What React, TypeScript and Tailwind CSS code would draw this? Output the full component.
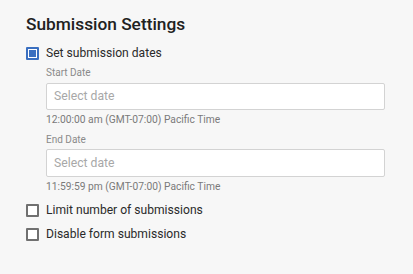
export default function App() {
  return (
    <main className="min-h-screen bg-[#f7f7f7] px-[26px] pt-[13px] font-['Roboto',sans-serif]">
      <h2 className="text-[17.3px] font-medium leading-[22px] text-[#212121]">Submission Settings</h2>

      {/* Dates */}
      <label className="mt-[9px] flex h-[18px] items-center gap-[7px]">
        <span className="flex h-[13px] w-[13px] items-center justify-center rounded-[1px] border-2 border-[#3a6fc0] bg-white">
          <span className="h-[7px] w-[7px] bg-[#3a6fc0]"></span>
        </span>
        <span className="text-[12.1px] text-[#2a2a2a]">Set submission dates</span>
      </label>

      <div className="w-[359px] pl-[20px]">
        <div className="mt-[4px] text-[10px] leading-[14px] text-[#8a8a8a]">Start Date</div>
        <div className="mt-[3px] flex h-[27px] items-center rounded-[2px] border border-[#d3d3d3] bg-white px-[7px] text-[12.2px] text-[#a8a8a8]">
          Select date
        </div>
        <div className="mt-[3px] text-[10.25px] leading-[14px] text-[#7a7a7a]">12:00:00 am (GMT-07:00) Pacific Time</div>

        <div className="mt-[6px] text-[10px] leading-[14px] text-[#8a8a8a]">End Date</div>
        <div className="mt-[2px] flex h-[28px] items-center rounded-[2px] border border-[#d3d3d3] bg-white px-[7px] text-[12.2px] text-[#a8a8a8]">
          Select date
        </div>
        <div className="mt-[3px] text-[10.25px] leading-[14px] text-[#7a7a7a]">11:59:59 pm (GMT-07:00) Pacific Time</div>
      </div>

      <label className="mt-[7px] flex h-[18px] items-center gap-[7px]">
        <span className="h-[13px] w-[13px] rounded-[1px] border-2 border-[#707070] bg-white"></span>
        <span className="text-[12.1px] text-[#2a2a2a]">Limit number of submissions</span>
      </label>
      <label className="mt-[6px] flex h-[18px] items-center gap-[7px]">
        <span className="h-[13px] w-[13px] rounded-[1px] border-2 border-[#707070] bg-white"></span>
        <span className="text-[12.1px] text-[#2a2a2a]">Disable form submissions</span>
      </label>
    </main>
  );
}
